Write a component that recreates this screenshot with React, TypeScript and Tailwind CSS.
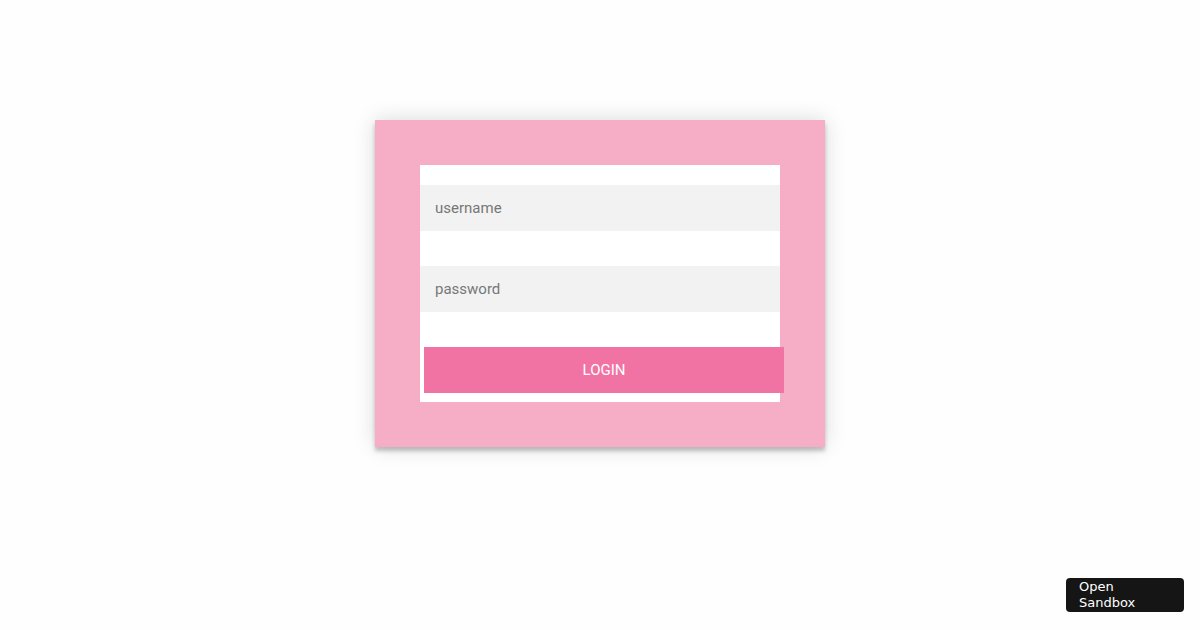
import React from 'react';

const App = () => {
  return (
    <div className="relative min-h-[630px] w-full bg-[#fefefe] font-['Roboto',sans-serif]">
      <div className="flex justify-center pt-[120px]">
        <div className="w-[450px] bg-[#f5aec6] p-[45px] shadow-[0_0_20px_rgba(0,0,0,0.15),0_4px_4px_rgba(0,0,0,0.22)]">
          <form className="flex flex-col bg-white pt-[20px] pb-[9px]">
            <input
              type="text"
              placeholder="username"
              className="h-[46px] w-full bg-[#f2f2f2] px-[15px] text-[15px] text-[#555] outline-none placeholder:text-[#777]"
            />
            <input
              type="password"
              placeholder="password"
              className="mt-[35px] h-[46px] w-full bg-[#f2f2f2] px-[15px] text-[15px] text-[#555] outline-none placeholder:text-[#777]"
            />
            <button
              type="button"
              className="mt-[35px] ml-[4px] h-[46px] w-[360px] bg-[#f173a4] text-[15px] uppercase text-white"
            >
              Login
            </button>
          </form>
        </div>
      </div>

      <div className="absolute right-[16px] bottom-[18px] w-[118px] rounded-[4px] bg-[#151515] py-[1px] pr-[30px] pl-[13px] font-['DejaVu_Sans',sans-serif] text-[13px] leading-[16px] text-white">
        Open Sandbox
      </div>
    </div>
  );
};

export default App;
